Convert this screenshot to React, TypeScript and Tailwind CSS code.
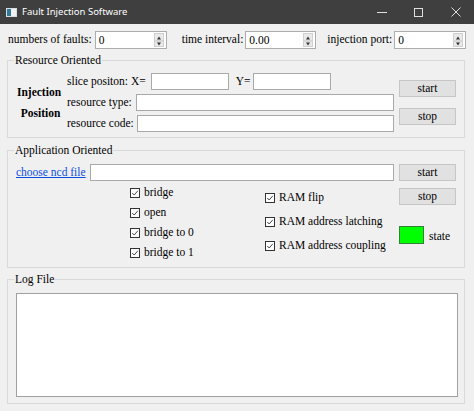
import React from 'react';

const SpinBox: React.FC<{ value: string; width: string }> = ({ value, width }) => (
    <div className={`flex h-[18px] border border-[#adadad] bg-white ${width}`}>
        <span className="flex-1 pl-[3px] leading-[16px]">{value}</span>
        <div className="w-[10px] my-[1px] mr-[2px] bg-[#e9e9e9] border border-[#d0d0d0]">
            <svg width="8" height="14" viewBox="0 0 8 14" className="block">
                <path d="M2 5.5 L6 5.5 L4 2.5 Z" fill="#333" />
                <line x1="0" y1="7" x2="8" y2="7" stroke="#c4c4c4" strokeWidth="1" />
                <path d="M2 8.5 L6 8.5 L4 11.5 Z" fill="#333" />
            </svg>
        </div>
    </div>
);

const Check: React.FC<{ label: string }> = ({ label }) => (
    <div className="flex items-center h-full gap-[4px]">
        <svg width="10" height="10" viewBox="0 0 10 10" className="shrink-0">
            <rect x="0.5" y="0.5" width="9" height="9" fill="white" stroke="#333" />
            <path d="M2.2 5 L4.2 7 L7.8 2.8" fill="none" stroke="#333" strokeWidth="0.9" />
        </svg>
        <span>{label}</span>
    </div>
);

const Btn: React.FC<{ label: string }> = ({ label }) => (
    <button className="w-[57px] h-[17px] bg-[#e1e1e1] border border-[#c6c6c6] leading-[15px] text-center">
        {label}
    </button>
);

const Field: React.FC<{ width?: string }> = ({ width = 'flex-1' }) => (
    <div className={`h-[17px] bg-white border border-[#a9a9a9] ${width}`} />
);

export default function App() {
    return (
        <div
            className="w-[474px] h-[411px] bg-[#f0f0f0] flex flex-col text-[11.5px] text-black overflow-hidden"
            style={{ fontFamily: '"Liberation Serif", "Times New Roman", serif' }}
        >
            {/* title bar */}
            <div
                className="h-[24px] bg-[#3f3f3f] flex items-center text-white text-[9.5px]"
                style={{ fontFamily: '"Noto Sans", sans-serif' }}
            >
                <svg width="11" height="9" viewBox="0 0 11 9" className="ml-[6px]">
                    <rect x="0" y="0" width="11" height="9" fill="#d7dde2" />
                    <rect x="1" y="1" width="4" height="7" fill="#2f7a96" />
                    <rect x="5" y="1" width="5" height="7" fill="#eef2f4" />
                </svg>
                <span className="ml-[5px]">Fault Injection Software</span>
                <div className="ml-auto flex h-full">
                    <div className="w-[37px] flex items-center justify-center">
                        <svg width="10" height="10" viewBox="0 0 10 10">
                            <line x1="0" y1="5.5" x2="10" y2="5.5" stroke="#e0e0e0" strokeWidth="1" />
                        </svg>
                    </div>
                    <div className="w-[37px] flex items-center justify-center">
                        <svg width="9" height="9" viewBox="0 0 9 9">
                            <rect x="0.5" y="0.5" width="8" height="8" fill="none" stroke="#e0e0e0" strokeWidth="1" />
                        </svg>
                    </div>
                    <div className="w-[37px] flex items-center justify-center">
                        <svg width="10" height="10" viewBox="0 0 10 10">
                            <path d="M0.5 0.5 L9.5 9.5 M9.5 0.5 L0.5 9.5" stroke="#e0e0e0" strokeWidth="1" />
                        </svg>
                    </div>
                </div>
            </div>

            {/* top row */}
            <div className="flex items-center h-[18px] mt-[7px] pl-[8px]">
                <span>numbers of faults:</span>
                <div className="ml-[3px]"><SpinBox value="0" width="w-[72px]" /></div>
                <span className="ml-[15px]">time interval:</span>
                <div className="ml-[2px]"><SpinBox value="0.00" width="w-[71px]" /></div>
                <span className="ml-[11px]">injection port:</span>
                <div className="ml-[2px]"><SpinBox value="0" width="w-[72px]" /></div>
            </div>

            {/* resource oriented */}
            <fieldset className="ml-[7px] mr-[9px] mt-[4px] border border-[#d9d9d9] pl-[7px] pr-[8px] pb-[5px]">
                <legend className="leading-[14px] px-[1px] -ml-[1px]">Resource Oriented</legend>
                <div className="flex mt-[6px]">
                    <div className="w-[48px] flex flex-col items-center justify-center font-bold leading-[21px]">
                        <span>Injection</span>
                        <span className="pl-[3px]">Position</span>
                    </div>
                    <div className="w-[327px] ml-[4px] flex flex-col gap-[4px]">
                        <div className="flex items-center h-[17px]">
                            <span>slice positon: X=</span>
                            <div className="ml-[5px]"><Field width="w-[78px]" /></div>
                            <span className="ml-[7px]">Y=</span>
                            <div className="ml-[3px]"><Field width="w-[78px]" /></div>
                        </div>
                        <div className="flex items-center h-[17px] gap-[4px]">
                            <span>resource type:</span>
                            <Field />
                        </div>
                        <div className="flex items-center h-[17px] gap-[3px]">
                            <span>resource code:</span>
                            <Field />
                        </div>
                    </div>
                    <div className="ml-[5px] pt-[7px] flex flex-col gap-[11px]">
                        <Btn label="start" />
                        <Btn label="stop" />
                    </div>
                </div>
            </fieldset>

            {/* application oriented */}
            <fieldset className="ml-[7px] mr-[9px] mt-[5px] border border-[#d9d9d9] pl-[7px] pr-[8px] pb-[4px]">
                <legend className="leading-[14px] px-[1px] -ml-[1px]">Application Oriented</legend>
                <div className="flex items-center mt-[7px] h-[17px]">
                    <a href="#" className="ml-[1px] text-[#0b4fe0] underline">choose ncd file</a>
                    <div className="flex-1 ml-[4px]"><Field width="w-full" /></div>
                    <div className="ml-[5px]"><Btn label="start" /></div>
                </div>
                <div className="flex mt-[2px]">
                    <div className="ml-[115px] w-[135px] flex flex-col">
                        {['bridge', 'open', 'bridge to 0', 'bridge to 1'].map(l => (
                            <div key={l} className="h-[20px]"><Check label={l} /></div>
                        ))}
                    </div>
                    <div className="flex-1 pt-[3px] flex flex-col">
                        {['RAM flip', 'RAM address latching', 'RAM address coupling'].map(l => (
                            <div key={l} className="h-[24px]"><Check label={l} /></div>
                        ))}
                    </div>
                    <div className="w-[57px] ml-[5px] pt-[5px] flex flex-col">
                        <Btn label="stop" />
                        <div className="flex items-center mt-[20px] gap-[5px]">
                            <div className="w-[25px] h-[18px] bg-[#00ff00] border border-[#4a4a4a]/70" />
                            <span className="mt-[3px]">state</span>
                        </div>
                    </div>
                </div>
            </fieldset>

            {/* log file */}
            <fieldset className="ml-[7px] mr-[9px] mt-[4px] border border-[#d9d9d9] pl-[8px] pr-[6px] pb-[6px]">
                <legend className="leading-[14px] px-[1px] -ml-[2px]">Log File</legend>
                <textarea className="block mt-[7px] w-full h-[104px] bg-white border border-[#a0a0a0] resize-none outline-none" />
            </fieldset>
        </div>
    );
}
